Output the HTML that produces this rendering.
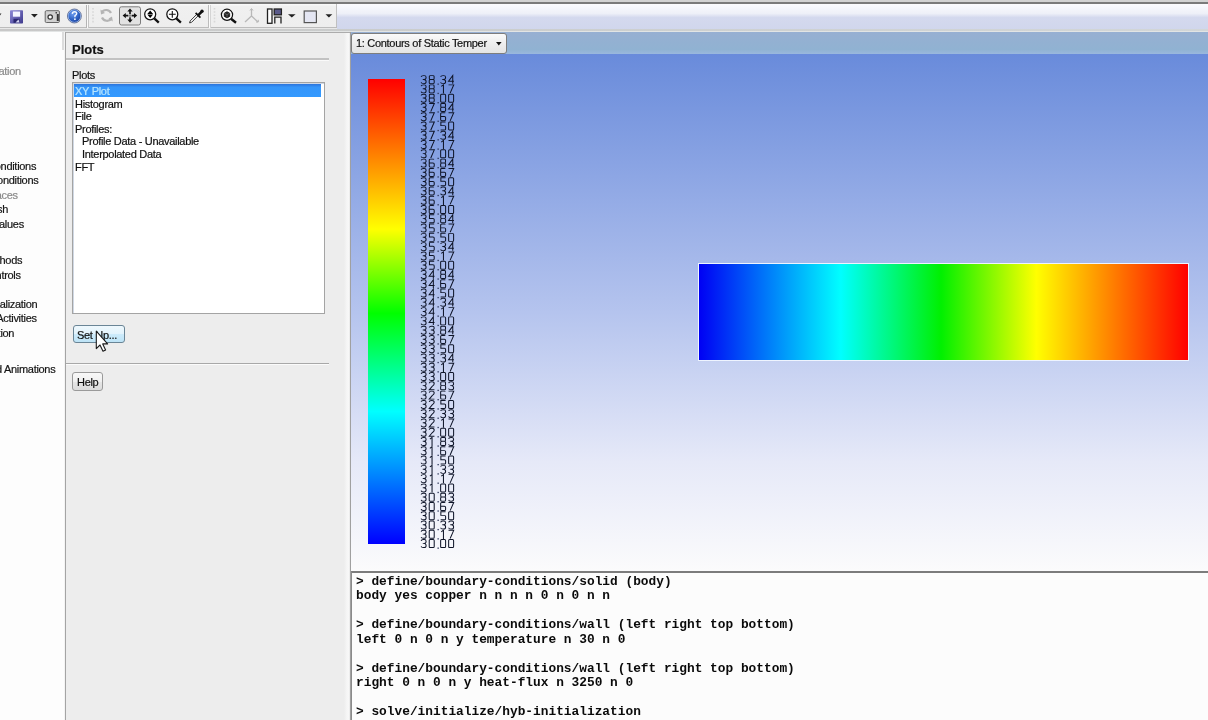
<!DOCTYPE html>
<html><head><meta charset="utf-8">
<style>
*{margin:0;padding:0;box-sizing:border-box}
html,body{width:1208px;height:720px;overflow:hidden;background:#f0f0f0;font-family:"Liberation Sans",sans-serif;position:relative}
.a{position:absolute}
.t{will-change:transform;-webkit-text-stroke:0.2px currentColor;position:absolute;white-space:pre;font-size:11px;letter-spacing:-0.3px;color:#000;line-height:12px}
.lab{position:absolute;left:420.6px;font-family:"Liberation Sans",sans-serif;font-size:12.0px;letter-spacing:1.4px;line-height:10px;color:#0c1430;white-space:pre}
.lab .dot{letter-spacing:0}
.con{will-change:transform;position:absolute;left:356.3px;font-family:"Liberation Mono",monospace;font-weight:bold;font-size:12.83px;line-height:14px;color:#0a0a0a;white-space:pre}
</style></head><body>
<!-- top strip -->
<div class="a" style="left:0;top:0;width:1208px;height:2px;background:#d2d2d2"></div>
<div class="a" style="left:0;top:2px;width:1208px;height:2px;background:#7a7a7a"></div>
<!-- toolbar -->
<div class="a" style="left:0;top:4px;width:337px;height:23px;background:linear-gradient(#fbfbfb,#f0f0f0 10%,#eeeeee)"></div>
<div class="a" style="left:336px;top:4px;width:1px;height:23px;background:#c0c0c0"></div>
<div class="a" style="left:337px;top:4px;width:871px;height:27px;background:linear-gradient(#fbfbfe,#eef0f8 35%,#d4d9ee 50%,#d0d6ec)"></div>
<div class="a" style="left:0;top:27px;width:337px;height:1px;background:#bcbcbc"></div>
<div class="a" style="left:0;top:28px;width:337px;height:1px;background:#e8e8e8"></div>
<div class="a" style="left:0;top:29px;width:1208px;height:2px;background:linear-gradient(90deg,#c8c8c8,#cacccc 30%,#d2d6d8)"></div>
<div class="a" style="left:0;top:31px;width:1208px;height:1px;background:#e2e4e4"></div>
<div class="a" style="left:0;top:32px;width:351px;height:1px;background:#acacac"></div>

<svg class="a" style="left:0;top:0" width="340" height="30" viewBox="0 0 340 30">
 <!-- cut dropdown arrow -->
 <path d="M-3 13.5 L1.5 13.5 L-0.8 16.5Z" fill="#333"/>
 <!-- save -->
 <defs>
  <linearGradient id="sv" x1="0" x2="1" y1="0" y2="1"><stop offset="0" stop-color="#8d88d8"/><stop offset="1" stop-color="#3e3a8c"/></linearGradient>
 </defs>
 <rect x="10" y="10.3" width="13" height="13.2" rx="0.8" fill="url(#sv)"/>
 <rect x="12.9" y="11.5" width="7.2" height="5.2" fill="#f4f4ff"/>
 <rect x="13.5" y="18.8" width="6" height="4" fill="#2a2670"/>
 <path d="M15.5 22.5 L18.5 19.5 L19.5 22.5Z" fill="#d8d8f4"/>
 <!-- dropdown -->
 <path d="M31 14 L37.8 14 L34.4 17.6Z" fill="#222"/>
 <!-- camera -->
 <rect x="45.2" y="10.7" width="14.2" height="11.8" rx="1.2" fill="#d0d0d0" stroke="#666" stroke-width="1"/>
 <circle cx="50.2" cy="17" r="2.2" fill="#fff" stroke="#333" stroke-width="1.2"/>
 <rect x="56.8" y="14" width="2" height="7" fill="#333"/>
 <rect x="55.5" y="12" width="1.5" height="1.5" fill="#444"/>
 <!-- help -->
 <defs><radialGradient id="hg" cx="0.38" cy="0.32" r="0.75"><stop offset="0" stop-color="#6f9ef0"/><stop offset="0.6" stop-color="#2f62c4"/><stop offset="1" stop-color="#1d3f9a"/></radialGradient></defs>
 <circle cx="74.4" cy="16" r="6.4" fill="url(#hg)" stroke="#9cc0f4" stroke-width="0.9"/>
 <circle cx="74.4" cy="16" r="7" fill="none" stroke="#44527e" stroke-width="0.7"/>
 <path d="M72.3 13.9 Q72.4 11.8 74.6 11.8 Q76.7 11.8 76.7 13.6 Q76.7 14.8 75 15.7 L74.9 17.2" fill="none" stroke="#f4f8ff" stroke-width="1.4"/>
 <rect x="74.1" y="18.4" width="1.6" height="1.6" fill="#f4f8ff"/>
 <!-- separator -->
 <rect x="86" y="5" width="1" height="23" fill="#b4b4b4"/>
 <rect x="87" y="5" width="1" height="23" fill="#fafafa"/>
 <rect x="88" y="5" width="1" height="23" fill="#c4c4c4"/>
 <path d="M93 8 V24" stroke="#d8d8d8" stroke-width="1.6" stroke-dasharray="1.6 1.6"/>
 <!-- rotate (gray) -->
 <path d="M111 13 A5.5 5.5 0 0 0 101.5 12.5" fill="none" stroke="#b4b4b4" stroke-width="2.2"/>
 <path d="M102 17.5 A5.5 5.5 0 0 0 111.5 18.5" fill="none" stroke="#b4b4b4" stroke-width="2.2"/>
 <path d="M100.5 9.5 L101 14.5 L105 13Z" fill="#b4b4b4"/>
 <path d="M112.8 21.5 L112 16.5 L108.5 18.5Z" fill="#b4b4b4"/>
 <!-- pan pressed -->
 <rect x="119.5" y="6.8" width="21" height="18.2" rx="2" fill="#e2e2e2" stroke="#7c7c7c" stroke-width="1"/>
 <path d="M130 11 V14 M130 17.2 V20.2 M125 15.6 H128.3 M131.7 15.6 H135" stroke="#111" stroke-width="1.6"/>
 <path d="M130 14 V17.2 M128.3 15.6 H131.7" stroke="#888" stroke-width="1.2"/>
 <path d="M130 8.4 L127.3 11.6 H132.7Z M130 22.8 L127.3 19.6 H132.7Z M122.6 15.6 L125.8 12.9 V18.3Z M137.2 15.6 L134 12.9 V18.3Z" fill="#111"/>
 <!-- zoom in/out -->
 <circle cx="150.2" cy="14.3" r="5.5" fill="#fff" stroke="#111" stroke-width="1.25"/>
 <path d="M154.2 18.3 L158.8 22.6" stroke="#111" stroke-width="2.3"/>
 <path d="M150.2 10.6 L147.3 14 H153.1Z M150.2 17.9 L147.3 14.6 H153.1Z" fill="#000"/>
 <!-- zoom plus -->
 <circle cx="172.3" cy="14.3" r="5.5" fill="#fff" stroke="#111" stroke-width="1.25"/>
 <path d="M176.3 18.3 L180.9 22.6" stroke="#111" stroke-width="2.3"/>
 <path d="M172.3 10.9 V17.7 M168.9 14.3 H175.7" stroke="#111" stroke-width="1.1"/>
 <!-- dropper -->
 <path d="M189.6 22.9 L190.2 20.9 L197.2 13.9 L198.6 15.3 L191.6 22.3Z" fill="#fbfbfb" stroke="#222" stroke-width="0.9" stroke-linejoin="round"/>
 <path d="M195.6 12.9 L200.4 17.7" stroke="#111" stroke-width="1.7"/>
 <path d="M198 15.4 L201.6 11.8" stroke="#111" stroke-width="2.6"/>
 <circle cx="202" cy="11.2" r="1.7" fill="#111"/>
 <!-- separator -->
 <rect x="208" y="5" width="1" height="23" fill="#bcbcbc"/>
 <rect x="209" y="5" width="1" height="23" fill="#fafafa"/>
 <rect x="210" y="5" width="1" height="23" fill="#d4d4d4"/>
 <path d="M214.5 8 V24" stroke="#d8d8d8" stroke-width="1.6" stroke-dasharray="1.6 1.6"/>
 <!-- zoom fit -->
 <circle cx="227" cy="14.8" r="5.6" fill="#fff" stroke="#111" stroke-width="1.25"/>
 <path d="M231 18.8 L236 22.8" stroke="#111" stroke-width="2.4"/>
 <path d="M224.3 13.2 L227 11.7 L229.7 13.2 V16.4 L227 17.9 L224.3 16.4Z" fill="#222" stroke="#111" stroke-width="0.8"/>
 <path d="M224.6 13.4 L227 14.6 L229.4 13.4 M227 14.6 V17.6" fill="none" stroke="#888" stroke-width="0.6"/>
 <!-- axes gray -->
 <path d="M251.5 9 V16 L245 22 M251.5 16 L258 22" fill="none" stroke="#b8b8b8" stroke-width="1.3"/>
 <path d="M250 10.5 L251.5 8.5 L253 10.5" fill="none" stroke="#b8b8b8" stroke-width="1"/>
 <path d="M256 22 H258.3 V19.8" fill="none" stroke="#b8b8b8" stroke-width="1"/>
 <!-- layout -->
 <rect x="267.5" y="9" width="4.5" height="14.3" fill="#fff" stroke="#222" stroke-width="1.3"/>
 <rect x="274.2" y="9" width="7.2" height="5.8" fill="#5a5a8a" stroke="#222" stroke-width="1.3"/>
 <path d="M274.8 23.4 V17.2 H281 V23.4" fill="none" stroke="#222" stroke-width="1.3"/>
 <path d="M288 14.3 L295.6 14.3 L291.8 17.6Z" fill="#222"/>
 <!-- square -->
 <rect x="304.2" y="11" width="12.2" height="11.6" fill="#e4e6f2" stroke="#555" stroke-width="1.2"/>
 <path d="M325.5 14.3 L332.3 14.3 L328.9 17.6Z" fill="#222"/>
</svg>

<!-- left nav panel -->
<div class="a" style="left:0;top:32px;width:65px;height:688px;background:#fdfdfd;overflow:hidden">
<div class="a" style="left:62px;top:0;width:2.6px;height:17.5px;background:#dcdcdc"></div>
</div>
<div class="a" style="left:0;top:0;width:65px;height:720px;overflow:hidden">
<div class="t" style="right:44.6px;top:65.0px;color:#8a8a8a">Mesh Generation</div>
<div class="t" style="right:28.9px;top:159.8px;color:#141414">Cell Zone Conditions</div>
<div class="t" style="right:26.7px;top:174.3px;color:#141414">Boundary Conditions</div>
<div class="t" style="right:47.2px;top:188.7px;color:#8a8a8a">Mesh Interfaces</div>
<div class="t" style="right:57.0px;top:203.0px;color:#141414">Dynamic Mesh</div>
<div class="t" style="right:41.1px;top:217.6px;color:#141414">Reference Values</div>
<div class="t" style="right:43.1px;top:254.2px;color:#141414">Solution Methods</div>
<div class="t" style="right:44.4px;top:268.5px;color:#141414">Solution Controls</div>
<div class="t" style="right:28.1px;top:297.9px;color:#141414">Solution Initialization</div>
<div class="t" style="right:28.1px;top:312.3px;color:#141414">Calculation Activities</div>
<div class="t" style="right:51.2px;top:326.6px;color:#141414">Run Calculation</div>
<div class="t" style="right:9.6px;top:363.3px;color:#141414">Graphics and Animations</div>
</div>
<div class="a" style="left:64px;top:32px;width:1px;height:688px;background:#f4f4f4"></div><div class="a" style="left:65px;top:32px;width:1px;height:688px;background:#a4a4a4"></div>

<!-- middle panel -->
<div class="a" style="left:66px;top:33px;width:284px;height:687px;background:#ededed"></div>
<div class="a" style="left:344px;top:33px;width:5px;height:687px;background:linear-gradient(90deg,#ededed,#f6f6f6 60%,#f8f8f8)"></div>
<div class="a" style="left:349.5px;top:32px;width:1.2px;height:688px;background:#a0a0a0"></div>
<div class="t" style="left:71.5px;top:42px;font-weight:bold;font-size:13px;letter-spacing:0;line-height:15px;color:#111">Plots</div>
<div class="a" style="left:66px;top:58.2px;width:263px;height:1.4px;background:#c2c2c2"></div>
<div class="a" style="left:66px;top:59.5px;width:263px;height:1px;background:#fafafa"></div>
<div class="t" style="left:71.7px;top:69.4px;color:#111">Plots</div>
<div class="a" style="left:72px;top:82px;width:253px;height:232px;background:#fff;border:1px solid #a4a4a4;box-shadow:inset 1px 1px 0 #d0d8e4"></div>
<div class="a" style="left:74.4px;top:84.3px;width:247px;height:12.7px;background:linear-gradient(#2c74dc,#3596fa 25%,#3399ff)"></div>
<div class="t" style="left:75px;top:85.2px;color:#b8e6ff">XY Plot</div>
<div class="t" style="left:75px;top:97.9px;color:#101010">Histogram</div>
<div class="t" style="left:75px;top:110.2px;color:#101010">File</div>
<div class="t" style="left:75px;top:122.7px;color:#101010">Profiles:</div>
<div class="t" style="left:82px;top:135.4px;color:#101010">Profile Data - Unavailable</div>
<div class="t" style="left:82px;top:147.8px;color:#101010">Interpolated Data</div>
<div class="t" style="left:75px;top:160.5px;color:#101010">FFT</div>
<!-- Set Up button -->
<div class="a" style="left:72.5px;top:324.8px;width:52.3px;height:18.5px;border:1px solid #6a8596;border-radius:3px;background:linear-gradient(#eef8fd,#e2f3fc 50%,#cdebfb 51%,#bde3f6)"></div>
<div class="t" style="left:76.5px;top:328.5px;color:#111">Set Up...</div>
<!-- cursor -->
<svg class="a" style="left:95px;top:330px" width="16" height="22" viewBox="0 0 16 22">
 <path d="M1.3 1.2 L1.3 18.6 L5 15 L8 21.2 L10.6 20 L7.7 13.9 L12.6 13.9Z" fill="#fff" stroke="#1a1a1a" stroke-width="1.1" stroke-linejoin="round"/>
</svg>
<div class="a" style="left:66px;top:363px;width:263px;height:1px;background:#a8a8a8"></div>
<div class="a" style="left:66px;top:364px;width:263px;height:1px;background:#fbfbfb"></div>
<!-- Help button -->
<div class="a" style="left:72.2px;top:372.2px;width:30.8px;height:18.4px;border:1px solid #9a9a9a;border-radius:3px;background:linear-gradient(#f8f8f8,#f0f0f0 50%,#e6e6e6 51%,#dcdcdc)"></div>
<div class="t" style="left:76.5px;top:376px;color:#111">Help</div>

<!-- tab strip -->
<div class="a" style="left:351px;top:32px;width:857px;height:22px;background:linear-gradient(#97afd2,#90b2d2 80%,#9ab8de)"></div>
<div class="a" style="left:351px;top:32.5px;width:156px;height:21px;border:1px solid #7d7d7d;border-radius:3px;background:linear-gradient(#fafafa,#eeeeee 50%,#e4e4e4)"></div>
<div class="t" style="left:355.6px;top:37.4px;color:#111">1: Contours of Static Temper</div>
<svg class="a" style="left:494px;top:41px" width="10" height="6"><path d="M2 1 H7.6 L4.8 4.6Z" fill="#111"/></svg>

<!-- graphics -->
<div class="a" style="left:351px;top:54px;width:857px;height:517px;background:linear-gradient(#698bdb,#b5c4ee 50%,#e6e9f8 79%,#fbfbfc)"></div>
<div class="a" style="left:368px;top:79px;width:36.5px;height:464.5px;background:linear-gradient(#ff0000 0%,#ffff00 32.3%,#00ff00 50.4%,#00ffff 71.5%,#0000ff 100%)"></div>
<div class="a" style="left:698px;top:262.5px;width:491px;height:98px;border:1px solid #eef4ff;background:linear-gradient(90deg,#0000f4 0%,#00ffff 29%,#00f000 49.5%,#ffff00 69%,#ff0000 100%)"></div>
<svg class="a" style="left:0;top:0" width="1208" height="600" viewBox="0 0 1208 600"><g fill="none" stroke="#0e1428" stroke-width="0.95">
<path transform="translate(420.60,75.10) scale(1.08,1)" d="M0.5 1.8 Q0.7 0.5 2.6 0.5 H3.4 Q5.1 0.5 5.1 2.3 Q5.1 4.3 3 4.3 H2 M3 4.3 Q5.1 4.3 5.1 6.4 Q5.1 8.5 3.3 8.5 H2.6 Q0.7 8.5 0.5 7.2"/>
<path transform="translate(428.70,75.10) scale(1.08,1)" d="M1.6 0.5 H4 Q5 0.5 5 1.5 V3.3 Q5 4.3 4 4.3 H1.6 Q0.6 4.3 0.6 3.3 V1.5 Q0.6 0.5 1.6 0.5Z M1.6 4.3 H4 Q5.1 4.3 5.1 5.4 V7.4 Q5.1 8.5 4 8.5 H1.6 Q0.5 8.5 0.5 7.4 V5.4 Q0.5 4.3 1.6 4.3"/>
<path transform="translate(440.10,75.10) scale(1.08,1)" d="M0.5 1.8 Q0.7 0.5 2.6 0.5 H3.4 Q5.1 0.5 5.1 2.3 Q5.1 4.3 3 4.3 H2 M3 4.3 Q5.1 4.3 5.1 6.4 Q5.1 8.5 3.3 8.5 H2.6 Q0.7 8.5 0.5 7.2"/>
<path transform="translate(448.10,75.10) scale(1.08,1)" d="M4.3 8.7 V0.5 L0.4 6.2 H5.4"/>
<rect x="437.50" y="83.50" width="1.3" height="1.3" fill="#2a3458" stroke="none"/>
<path transform="translate(420.60,84.38) scale(1.08,1)" d="M0.5 1.8 Q0.7 0.5 2.6 0.5 H3.4 Q5.1 0.5 5.1 2.3 Q5.1 4.3 3 4.3 H2 M3 4.3 Q5.1 4.3 5.1 6.4 Q5.1 8.5 3.3 8.5 H2.6 Q0.7 8.5 0.5 7.2"/>
<path transform="translate(428.70,84.38) scale(1.08,1)" d="M1.6 0.5 H4 Q5 0.5 5 1.5 V3.3 Q5 4.3 4 4.3 H1.6 Q0.6 4.3 0.6 3.3 V1.5 Q0.6 0.5 1.6 0.5Z M1.6 4.3 H4 Q5.1 4.3 5.1 5.4 V7.4 Q5.1 8.5 4 8.5 H1.6 Q0.5 8.5 0.5 7.4 V5.4 Q0.5 4.3 1.6 4.3"/>
<path transform="translate(440.10,84.38) scale(1.08,1)" d="M3.1 -0.1 V9.2 M1.1 2 L3.1 0.4"/>
<path transform="translate(448.10,84.38) scale(1.08,1)" d="M0.4 0.5 H5.2 L1.9 8.7"/>
<rect x="437.50" y="92.78" width="1.3" height="1.3" fill="#2a3458" stroke="none"/>
<path transform="translate(420.60,93.66) scale(1.08,1)" d="M0.5 1.8 Q0.7 0.5 2.6 0.5 H3.4 Q5.1 0.5 5.1 2.3 Q5.1 4.3 3 4.3 H2 M3 4.3 Q5.1 4.3 5.1 6.4 Q5.1 8.5 3.3 8.5 H2.6 Q0.7 8.5 0.5 7.2"/>
<path transform="translate(428.70,93.66) scale(1.08,1)" d="M1.6 0.5 H4 Q5 0.5 5 1.5 V3.3 Q5 4.3 4 4.3 H1.6 Q0.6 4.3 0.6 3.3 V1.5 Q0.6 0.5 1.6 0.5Z M1.6 4.3 H4 Q5.1 4.3 5.1 5.4 V7.4 Q5.1 8.5 4 8.5 H1.6 Q0.5 8.5 0.5 7.4 V5.4 Q0.5 4.3 1.6 4.3"/>
<path transform="translate(440.10,93.66) scale(1.08,1)" d="M1.4 0.5 H4.2 Q5.1 0.5 5.1 1.6 V7.4 Q5.1 8.5 4.2 8.5 H1.4 Q0.5 8.5 0.5 7.4 V1.6 Q0.5 0.5 1.4 0.5Z"/>
<path transform="translate(448.10,93.66) scale(1.08,1)" d="M1.4 0.5 H4.2 Q5.1 0.5 5.1 1.6 V7.4 Q5.1 8.5 4.2 8.5 H1.4 Q0.5 8.5 0.5 7.4 V1.6 Q0.5 0.5 1.4 0.5Z"/>
<rect x="437.50" y="102.06" width="1.3" height="1.3" fill="#2a3458" stroke="none"/>
<path transform="translate(420.60,102.94) scale(1.08,1)" d="M0.5 1.8 Q0.7 0.5 2.6 0.5 H3.4 Q5.1 0.5 5.1 2.3 Q5.1 4.3 3 4.3 H2 M3 4.3 Q5.1 4.3 5.1 6.4 Q5.1 8.5 3.3 8.5 H2.6 Q0.7 8.5 0.5 7.2"/>
<path transform="translate(428.70,102.94) scale(1.08,1)" d="M0.4 0.5 H5.2 L1.9 8.7"/>
<path transform="translate(440.10,102.94) scale(1.08,1)" d="M1.6 0.5 H4 Q5 0.5 5 1.5 V3.3 Q5 4.3 4 4.3 H1.6 Q0.6 4.3 0.6 3.3 V1.5 Q0.6 0.5 1.6 0.5Z M1.6 4.3 H4 Q5.1 4.3 5.1 5.4 V7.4 Q5.1 8.5 4 8.5 H1.6 Q0.5 8.5 0.5 7.4 V5.4 Q0.5 4.3 1.6 4.3"/>
<path transform="translate(448.10,102.94) scale(1.08,1)" d="M4.3 8.7 V0.5 L0.4 6.2 H5.4"/>
<rect x="437.50" y="111.34" width="1.3" height="1.3" fill="#2a3458" stroke="none"/>
<path transform="translate(420.60,112.22) scale(1.08,1)" d="M0.5 1.8 Q0.7 0.5 2.6 0.5 H3.4 Q5.1 0.5 5.1 2.3 Q5.1 4.3 3 4.3 H2 M3 4.3 Q5.1 4.3 5.1 6.4 Q5.1 8.5 3.3 8.5 H2.6 Q0.7 8.5 0.5 7.2"/>
<path transform="translate(428.70,112.22) scale(1.08,1)" d="M0.4 0.5 H5.2 L1.9 8.7"/>
<path transform="translate(440.10,112.22) scale(1.08,1)" d="M4.9 0.8 Q4.6 0.5 4 0.5 H1.6 Q0.5 0.5 0.5 1.6 V7.4 Q0.5 8.5 1.6 8.5 H4 Q5.1 8.5 5.1 7.4 V5.4 Q5.1 4.3 4 4.3 H0.5"/>
<path transform="translate(448.10,112.22) scale(1.08,1)" d="M0.4 0.5 H5.2 L1.9 8.7"/>
<rect x="437.50" y="120.62" width="1.3" height="1.3" fill="#2a3458" stroke="none"/>
<path transform="translate(420.60,121.50) scale(1.08,1)" d="M0.5 1.8 Q0.7 0.5 2.6 0.5 H3.4 Q5.1 0.5 5.1 2.3 Q5.1 4.3 3 4.3 H2 M3 4.3 Q5.1 4.3 5.1 6.4 Q5.1 8.5 3.3 8.5 H2.6 Q0.7 8.5 0.5 7.2"/>
<path transform="translate(428.70,121.50) scale(1.08,1)" d="M0.4 0.5 H5.2 L1.9 8.7"/>
<path transform="translate(440.10,121.50) scale(1.08,1)" d="M5.1 0.5 H0.7 V4.1 H4 Q5.1 4.1 5.1 5.2 V7.4 Q5.1 8.5 4 8.5 H0.5"/>
<path transform="translate(448.10,121.50) scale(1.08,1)" d="M1.4 0.5 H4.2 Q5.1 0.5 5.1 1.6 V7.4 Q5.1 8.5 4.2 8.5 H1.4 Q0.5 8.5 0.5 7.4 V1.6 Q0.5 0.5 1.4 0.5Z"/>
<rect x="437.50" y="129.90" width="1.3" height="1.3" fill="#2a3458" stroke="none"/>
<path transform="translate(420.60,130.78) scale(1.08,1)" d="M0.5 1.8 Q0.7 0.5 2.6 0.5 H3.4 Q5.1 0.5 5.1 2.3 Q5.1 4.3 3 4.3 H2 M3 4.3 Q5.1 4.3 5.1 6.4 Q5.1 8.5 3.3 8.5 H2.6 Q0.7 8.5 0.5 7.2"/>
<path transform="translate(428.70,130.78) scale(1.08,1)" d="M0.4 0.5 H5.2 L1.9 8.7"/>
<path transform="translate(440.10,130.78) scale(1.08,1)" d="M0.5 1.8 Q0.7 0.5 2.6 0.5 H3.4 Q5.1 0.5 5.1 2.3 Q5.1 4.3 3 4.3 H2 M3 4.3 Q5.1 4.3 5.1 6.4 Q5.1 8.5 3.3 8.5 H2.6 Q0.7 8.5 0.5 7.2"/>
<path transform="translate(448.10,130.78) scale(1.08,1)" d="M4.3 8.7 V0.5 L0.4 6.2 H5.4"/>
<rect x="437.50" y="139.18" width="1.3" height="1.3" fill="#2a3458" stroke="none"/>
<path transform="translate(420.60,140.06) scale(1.08,1)" d="M0.5 1.8 Q0.7 0.5 2.6 0.5 H3.4 Q5.1 0.5 5.1 2.3 Q5.1 4.3 3 4.3 H2 M3 4.3 Q5.1 4.3 5.1 6.4 Q5.1 8.5 3.3 8.5 H2.6 Q0.7 8.5 0.5 7.2"/>
<path transform="translate(428.70,140.06) scale(1.08,1)" d="M0.4 0.5 H5.2 L1.9 8.7"/>
<path transform="translate(440.10,140.06) scale(1.08,1)" d="M3.1 -0.1 V9.2 M1.1 2 L3.1 0.4"/>
<path transform="translate(448.10,140.06) scale(1.08,1)" d="M0.4 0.5 H5.2 L1.9 8.7"/>
<rect x="437.50" y="148.46" width="1.3" height="1.3" fill="#2a3458" stroke="none"/>
<path transform="translate(420.60,149.34) scale(1.08,1)" d="M0.5 1.8 Q0.7 0.5 2.6 0.5 H3.4 Q5.1 0.5 5.1 2.3 Q5.1 4.3 3 4.3 H2 M3 4.3 Q5.1 4.3 5.1 6.4 Q5.1 8.5 3.3 8.5 H2.6 Q0.7 8.5 0.5 7.2"/>
<path transform="translate(428.70,149.34) scale(1.08,1)" d="M0.4 0.5 H5.2 L1.9 8.7"/>
<path transform="translate(440.10,149.34) scale(1.08,1)" d="M1.4 0.5 H4.2 Q5.1 0.5 5.1 1.6 V7.4 Q5.1 8.5 4.2 8.5 H1.4 Q0.5 8.5 0.5 7.4 V1.6 Q0.5 0.5 1.4 0.5Z"/>
<path transform="translate(448.10,149.34) scale(1.08,1)" d="M1.4 0.5 H4.2 Q5.1 0.5 5.1 1.6 V7.4 Q5.1 8.5 4.2 8.5 H1.4 Q0.5 8.5 0.5 7.4 V1.6 Q0.5 0.5 1.4 0.5Z"/>
<rect x="437.50" y="157.74" width="1.3" height="1.3" fill="#2a3458" stroke="none"/>
<path transform="translate(420.60,158.62) scale(1.08,1)" d="M0.5 1.8 Q0.7 0.5 2.6 0.5 H3.4 Q5.1 0.5 5.1 2.3 Q5.1 4.3 3 4.3 H2 M3 4.3 Q5.1 4.3 5.1 6.4 Q5.1 8.5 3.3 8.5 H2.6 Q0.7 8.5 0.5 7.2"/>
<path transform="translate(428.70,158.62) scale(1.08,1)" d="M4.9 0.8 Q4.6 0.5 4 0.5 H1.6 Q0.5 0.5 0.5 1.6 V7.4 Q0.5 8.5 1.6 8.5 H4 Q5.1 8.5 5.1 7.4 V5.4 Q5.1 4.3 4 4.3 H0.5"/>
<path transform="translate(440.10,158.62) scale(1.08,1)" d="M1.6 0.5 H4 Q5 0.5 5 1.5 V3.3 Q5 4.3 4 4.3 H1.6 Q0.6 4.3 0.6 3.3 V1.5 Q0.6 0.5 1.6 0.5Z M1.6 4.3 H4 Q5.1 4.3 5.1 5.4 V7.4 Q5.1 8.5 4 8.5 H1.6 Q0.5 8.5 0.5 7.4 V5.4 Q0.5 4.3 1.6 4.3"/>
<path transform="translate(448.10,158.62) scale(1.08,1)" d="M4.3 8.7 V0.5 L0.4 6.2 H5.4"/>
<rect x="437.50" y="167.02" width="1.3" height="1.3" fill="#2a3458" stroke="none"/>
<path transform="translate(420.60,167.90) scale(1.08,1)" d="M0.5 1.8 Q0.7 0.5 2.6 0.5 H3.4 Q5.1 0.5 5.1 2.3 Q5.1 4.3 3 4.3 H2 M3 4.3 Q5.1 4.3 5.1 6.4 Q5.1 8.5 3.3 8.5 H2.6 Q0.7 8.5 0.5 7.2"/>
<path transform="translate(428.70,167.90) scale(1.08,1)" d="M4.9 0.8 Q4.6 0.5 4 0.5 H1.6 Q0.5 0.5 0.5 1.6 V7.4 Q0.5 8.5 1.6 8.5 H4 Q5.1 8.5 5.1 7.4 V5.4 Q5.1 4.3 4 4.3 H0.5"/>
<path transform="translate(440.10,167.90) scale(1.08,1)" d="M4.9 0.8 Q4.6 0.5 4 0.5 H1.6 Q0.5 0.5 0.5 1.6 V7.4 Q0.5 8.5 1.6 8.5 H4 Q5.1 8.5 5.1 7.4 V5.4 Q5.1 4.3 4 4.3 H0.5"/>
<path transform="translate(448.10,167.90) scale(1.08,1)" d="M0.4 0.5 H5.2 L1.9 8.7"/>
<rect x="437.50" y="176.30" width="1.3" height="1.3" fill="#2a3458" stroke="none"/>
<path transform="translate(420.60,177.18) scale(1.08,1)" d="M0.5 1.8 Q0.7 0.5 2.6 0.5 H3.4 Q5.1 0.5 5.1 2.3 Q5.1 4.3 3 4.3 H2 M3 4.3 Q5.1 4.3 5.1 6.4 Q5.1 8.5 3.3 8.5 H2.6 Q0.7 8.5 0.5 7.2"/>
<path transform="translate(428.70,177.18) scale(1.08,1)" d="M4.9 0.8 Q4.6 0.5 4 0.5 H1.6 Q0.5 0.5 0.5 1.6 V7.4 Q0.5 8.5 1.6 8.5 H4 Q5.1 8.5 5.1 7.4 V5.4 Q5.1 4.3 4 4.3 H0.5"/>
<path transform="translate(440.10,177.18) scale(1.08,1)" d="M5.1 0.5 H0.7 V4.1 H4 Q5.1 4.1 5.1 5.2 V7.4 Q5.1 8.5 4 8.5 H0.5"/>
<path transform="translate(448.10,177.18) scale(1.08,1)" d="M1.4 0.5 H4.2 Q5.1 0.5 5.1 1.6 V7.4 Q5.1 8.5 4.2 8.5 H1.4 Q0.5 8.5 0.5 7.4 V1.6 Q0.5 0.5 1.4 0.5Z"/>
<rect x="437.50" y="185.58" width="1.3" height="1.3" fill="#2a3458" stroke="none"/>
<path transform="translate(420.60,186.46) scale(1.08,1)" d="M0.5 1.8 Q0.7 0.5 2.6 0.5 H3.4 Q5.1 0.5 5.1 2.3 Q5.1 4.3 3 4.3 H2 M3 4.3 Q5.1 4.3 5.1 6.4 Q5.1 8.5 3.3 8.5 H2.6 Q0.7 8.5 0.5 7.2"/>
<path transform="translate(428.70,186.46) scale(1.08,1)" d="M4.9 0.8 Q4.6 0.5 4 0.5 H1.6 Q0.5 0.5 0.5 1.6 V7.4 Q0.5 8.5 1.6 8.5 H4 Q5.1 8.5 5.1 7.4 V5.4 Q5.1 4.3 4 4.3 H0.5"/>
<path transform="translate(440.10,186.46) scale(1.08,1)" d="M0.5 1.8 Q0.7 0.5 2.6 0.5 H3.4 Q5.1 0.5 5.1 2.3 Q5.1 4.3 3 4.3 H2 M3 4.3 Q5.1 4.3 5.1 6.4 Q5.1 8.5 3.3 8.5 H2.6 Q0.7 8.5 0.5 7.2"/>
<path transform="translate(448.10,186.46) scale(1.08,1)" d="M4.3 8.7 V0.5 L0.4 6.2 H5.4"/>
<rect x="437.50" y="194.86" width="1.3" height="1.3" fill="#2a3458" stroke="none"/>
<path transform="translate(420.60,195.74) scale(1.08,1)" d="M0.5 1.8 Q0.7 0.5 2.6 0.5 H3.4 Q5.1 0.5 5.1 2.3 Q5.1 4.3 3 4.3 H2 M3 4.3 Q5.1 4.3 5.1 6.4 Q5.1 8.5 3.3 8.5 H2.6 Q0.7 8.5 0.5 7.2"/>
<path transform="translate(428.70,195.74) scale(1.08,1)" d="M4.9 0.8 Q4.6 0.5 4 0.5 H1.6 Q0.5 0.5 0.5 1.6 V7.4 Q0.5 8.5 1.6 8.5 H4 Q5.1 8.5 5.1 7.4 V5.4 Q5.1 4.3 4 4.3 H0.5"/>
<path transform="translate(440.10,195.74) scale(1.08,1)" d="M3.1 -0.1 V9.2 M1.1 2 L3.1 0.4"/>
<path transform="translate(448.10,195.74) scale(1.08,1)" d="M0.4 0.5 H5.2 L1.9 8.7"/>
<rect x="437.50" y="204.14" width="1.3" height="1.3" fill="#2a3458" stroke="none"/>
<path transform="translate(420.60,205.02) scale(1.08,1)" d="M0.5 1.8 Q0.7 0.5 2.6 0.5 H3.4 Q5.1 0.5 5.1 2.3 Q5.1 4.3 3 4.3 H2 M3 4.3 Q5.1 4.3 5.1 6.4 Q5.1 8.5 3.3 8.5 H2.6 Q0.7 8.5 0.5 7.2"/>
<path transform="translate(428.70,205.02) scale(1.08,1)" d="M4.9 0.8 Q4.6 0.5 4 0.5 H1.6 Q0.5 0.5 0.5 1.6 V7.4 Q0.5 8.5 1.6 8.5 H4 Q5.1 8.5 5.1 7.4 V5.4 Q5.1 4.3 4 4.3 H0.5"/>
<path transform="translate(440.10,205.02) scale(1.08,1)" d="M1.4 0.5 H4.2 Q5.1 0.5 5.1 1.6 V7.4 Q5.1 8.5 4.2 8.5 H1.4 Q0.5 8.5 0.5 7.4 V1.6 Q0.5 0.5 1.4 0.5Z"/>
<path transform="translate(448.10,205.02) scale(1.08,1)" d="M1.4 0.5 H4.2 Q5.1 0.5 5.1 1.6 V7.4 Q5.1 8.5 4.2 8.5 H1.4 Q0.5 8.5 0.5 7.4 V1.6 Q0.5 0.5 1.4 0.5Z"/>
<rect x="437.50" y="213.42" width="1.3" height="1.3" fill="#2a3458" stroke="none"/>
<path transform="translate(420.60,214.30) scale(1.08,1)" d="M0.5 1.8 Q0.7 0.5 2.6 0.5 H3.4 Q5.1 0.5 5.1 2.3 Q5.1 4.3 3 4.3 H2 M3 4.3 Q5.1 4.3 5.1 6.4 Q5.1 8.5 3.3 8.5 H2.6 Q0.7 8.5 0.5 7.2"/>
<path transform="translate(428.70,214.30) scale(1.08,1)" d="M5.1 0.5 H0.7 V4.1 H4 Q5.1 4.1 5.1 5.2 V7.4 Q5.1 8.5 4 8.5 H0.5"/>
<path transform="translate(440.10,214.30) scale(1.08,1)" d="M1.6 0.5 H4 Q5 0.5 5 1.5 V3.3 Q5 4.3 4 4.3 H1.6 Q0.6 4.3 0.6 3.3 V1.5 Q0.6 0.5 1.6 0.5Z M1.6 4.3 H4 Q5.1 4.3 5.1 5.4 V7.4 Q5.1 8.5 4 8.5 H1.6 Q0.5 8.5 0.5 7.4 V5.4 Q0.5 4.3 1.6 4.3"/>
<path transform="translate(448.10,214.30) scale(1.08,1)" d="M4.3 8.7 V0.5 L0.4 6.2 H5.4"/>
<rect x="437.50" y="222.70" width="1.3" height="1.3" fill="#2a3458" stroke="none"/>
<path transform="translate(420.60,223.58) scale(1.08,1)" d="M0.5 1.8 Q0.7 0.5 2.6 0.5 H3.4 Q5.1 0.5 5.1 2.3 Q5.1 4.3 3 4.3 H2 M3 4.3 Q5.1 4.3 5.1 6.4 Q5.1 8.5 3.3 8.5 H2.6 Q0.7 8.5 0.5 7.2"/>
<path transform="translate(428.70,223.58) scale(1.08,1)" d="M5.1 0.5 H0.7 V4.1 H4 Q5.1 4.1 5.1 5.2 V7.4 Q5.1 8.5 4 8.5 H0.5"/>
<path transform="translate(440.10,223.58) scale(1.08,1)" d="M4.9 0.8 Q4.6 0.5 4 0.5 H1.6 Q0.5 0.5 0.5 1.6 V7.4 Q0.5 8.5 1.6 8.5 H4 Q5.1 8.5 5.1 7.4 V5.4 Q5.1 4.3 4 4.3 H0.5"/>
<path transform="translate(448.10,223.58) scale(1.08,1)" d="M0.4 0.5 H5.2 L1.9 8.7"/>
<rect x="437.50" y="231.98" width="1.3" height="1.3" fill="#2a3458" stroke="none"/>
<path transform="translate(420.60,232.86) scale(1.08,1)" d="M0.5 1.8 Q0.7 0.5 2.6 0.5 H3.4 Q5.1 0.5 5.1 2.3 Q5.1 4.3 3 4.3 H2 M3 4.3 Q5.1 4.3 5.1 6.4 Q5.1 8.5 3.3 8.5 H2.6 Q0.7 8.5 0.5 7.2"/>
<path transform="translate(428.70,232.86) scale(1.08,1)" d="M5.1 0.5 H0.7 V4.1 H4 Q5.1 4.1 5.1 5.2 V7.4 Q5.1 8.5 4 8.5 H0.5"/>
<path transform="translate(440.10,232.86) scale(1.08,1)" d="M5.1 0.5 H0.7 V4.1 H4 Q5.1 4.1 5.1 5.2 V7.4 Q5.1 8.5 4 8.5 H0.5"/>
<path transform="translate(448.10,232.86) scale(1.08,1)" d="M1.4 0.5 H4.2 Q5.1 0.5 5.1 1.6 V7.4 Q5.1 8.5 4.2 8.5 H1.4 Q0.5 8.5 0.5 7.4 V1.6 Q0.5 0.5 1.4 0.5Z"/>
<rect x="437.50" y="241.26" width="1.3" height="1.3" fill="#2a3458" stroke="none"/>
<path transform="translate(420.60,242.14) scale(1.08,1)" d="M0.5 1.8 Q0.7 0.5 2.6 0.5 H3.4 Q5.1 0.5 5.1 2.3 Q5.1 4.3 3 4.3 H2 M3 4.3 Q5.1 4.3 5.1 6.4 Q5.1 8.5 3.3 8.5 H2.6 Q0.7 8.5 0.5 7.2"/>
<path transform="translate(428.70,242.14) scale(1.08,1)" d="M5.1 0.5 H0.7 V4.1 H4 Q5.1 4.1 5.1 5.2 V7.4 Q5.1 8.5 4 8.5 H0.5"/>
<path transform="translate(440.10,242.14) scale(1.08,1)" d="M0.5 1.8 Q0.7 0.5 2.6 0.5 H3.4 Q5.1 0.5 5.1 2.3 Q5.1 4.3 3 4.3 H2 M3 4.3 Q5.1 4.3 5.1 6.4 Q5.1 8.5 3.3 8.5 H2.6 Q0.7 8.5 0.5 7.2"/>
<path transform="translate(448.10,242.14) scale(1.08,1)" d="M4.3 8.7 V0.5 L0.4 6.2 H5.4"/>
<rect x="437.50" y="250.54" width="1.3" height="1.3" fill="#2a3458" stroke="none"/>
<path transform="translate(420.60,251.42) scale(1.08,1)" d="M0.5 1.8 Q0.7 0.5 2.6 0.5 H3.4 Q5.1 0.5 5.1 2.3 Q5.1 4.3 3 4.3 H2 M3 4.3 Q5.1 4.3 5.1 6.4 Q5.1 8.5 3.3 8.5 H2.6 Q0.7 8.5 0.5 7.2"/>
<path transform="translate(428.70,251.42) scale(1.08,1)" d="M5.1 0.5 H0.7 V4.1 H4 Q5.1 4.1 5.1 5.2 V7.4 Q5.1 8.5 4 8.5 H0.5"/>
<path transform="translate(440.10,251.42) scale(1.08,1)" d="M3.1 -0.1 V9.2 M1.1 2 L3.1 0.4"/>
<path transform="translate(448.10,251.42) scale(1.08,1)" d="M0.4 0.5 H5.2 L1.9 8.7"/>
<rect x="437.50" y="259.82" width="1.3" height="1.3" fill="#2a3458" stroke="none"/>
<path transform="translate(420.60,260.70) scale(1.08,1)" d="M0.5 1.8 Q0.7 0.5 2.6 0.5 H3.4 Q5.1 0.5 5.1 2.3 Q5.1 4.3 3 4.3 H2 M3 4.3 Q5.1 4.3 5.1 6.4 Q5.1 8.5 3.3 8.5 H2.6 Q0.7 8.5 0.5 7.2"/>
<path transform="translate(428.70,260.70) scale(1.08,1)" d="M5.1 0.5 H0.7 V4.1 H4 Q5.1 4.1 5.1 5.2 V7.4 Q5.1 8.5 4 8.5 H0.5"/>
<path transform="translate(440.10,260.70) scale(1.08,1)" d="M1.4 0.5 H4.2 Q5.1 0.5 5.1 1.6 V7.4 Q5.1 8.5 4.2 8.5 H1.4 Q0.5 8.5 0.5 7.4 V1.6 Q0.5 0.5 1.4 0.5Z"/>
<path transform="translate(448.10,260.70) scale(1.08,1)" d="M1.4 0.5 H4.2 Q5.1 0.5 5.1 1.6 V7.4 Q5.1 8.5 4.2 8.5 H1.4 Q0.5 8.5 0.5 7.4 V1.6 Q0.5 0.5 1.4 0.5Z"/>
<rect x="437.50" y="269.10" width="1.3" height="1.3" fill="#2a3458" stroke="none"/>
<path transform="translate(420.60,269.98) scale(1.08,1)" d="M0.5 1.8 Q0.7 0.5 2.6 0.5 H3.4 Q5.1 0.5 5.1 2.3 Q5.1 4.3 3 4.3 H2 M3 4.3 Q5.1 4.3 5.1 6.4 Q5.1 8.5 3.3 8.5 H2.6 Q0.7 8.5 0.5 7.2"/>
<path transform="translate(428.70,269.98) scale(1.08,1)" d="M4.3 8.7 V0.5 L0.4 6.2 H5.4"/>
<path transform="translate(440.10,269.98) scale(1.08,1)" d="M1.6 0.5 H4 Q5 0.5 5 1.5 V3.3 Q5 4.3 4 4.3 H1.6 Q0.6 4.3 0.6 3.3 V1.5 Q0.6 0.5 1.6 0.5Z M1.6 4.3 H4 Q5.1 4.3 5.1 5.4 V7.4 Q5.1 8.5 4 8.5 H1.6 Q0.5 8.5 0.5 7.4 V5.4 Q0.5 4.3 1.6 4.3"/>
<path transform="translate(448.10,269.98) scale(1.08,1)" d="M4.3 8.7 V0.5 L0.4 6.2 H5.4"/>
<rect x="437.50" y="278.38" width="1.3" height="1.3" fill="#2a3458" stroke="none"/>
<path transform="translate(420.60,279.26) scale(1.08,1)" d="M0.5 1.8 Q0.7 0.5 2.6 0.5 H3.4 Q5.1 0.5 5.1 2.3 Q5.1 4.3 3 4.3 H2 M3 4.3 Q5.1 4.3 5.1 6.4 Q5.1 8.5 3.3 8.5 H2.6 Q0.7 8.5 0.5 7.2"/>
<path transform="translate(428.70,279.26) scale(1.08,1)" d="M4.3 8.7 V0.5 L0.4 6.2 H5.4"/>
<path transform="translate(440.10,279.26) scale(1.08,1)" d="M4.9 0.8 Q4.6 0.5 4 0.5 H1.6 Q0.5 0.5 0.5 1.6 V7.4 Q0.5 8.5 1.6 8.5 H4 Q5.1 8.5 5.1 7.4 V5.4 Q5.1 4.3 4 4.3 H0.5"/>
<path transform="translate(448.10,279.26) scale(1.08,1)" d="M0.4 0.5 H5.2 L1.9 8.7"/>
<rect x="437.50" y="287.66" width="1.3" height="1.3" fill="#2a3458" stroke="none"/>
<path transform="translate(420.60,288.54) scale(1.08,1)" d="M0.5 1.8 Q0.7 0.5 2.6 0.5 H3.4 Q5.1 0.5 5.1 2.3 Q5.1 4.3 3 4.3 H2 M3 4.3 Q5.1 4.3 5.1 6.4 Q5.1 8.5 3.3 8.5 H2.6 Q0.7 8.5 0.5 7.2"/>
<path transform="translate(428.70,288.54) scale(1.08,1)" d="M4.3 8.7 V0.5 L0.4 6.2 H5.4"/>
<path transform="translate(440.10,288.54) scale(1.08,1)" d="M5.1 0.5 H0.7 V4.1 H4 Q5.1 4.1 5.1 5.2 V7.4 Q5.1 8.5 4 8.5 H0.5"/>
<path transform="translate(448.10,288.54) scale(1.08,1)" d="M1.4 0.5 H4.2 Q5.1 0.5 5.1 1.6 V7.4 Q5.1 8.5 4.2 8.5 H1.4 Q0.5 8.5 0.5 7.4 V1.6 Q0.5 0.5 1.4 0.5Z"/>
<rect x="437.50" y="296.94" width="1.3" height="1.3" fill="#2a3458" stroke="none"/>
<path transform="translate(420.60,297.82) scale(1.08,1)" d="M0.5 1.8 Q0.7 0.5 2.6 0.5 H3.4 Q5.1 0.5 5.1 2.3 Q5.1 4.3 3 4.3 H2 M3 4.3 Q5.1 4.3 5.1 6.4 Q5.1 8.5 3.3 8.5 H2.6 Q0.7 8.5 0.5 7.2"/>
<path transform="translate(428.70,297.82) scale(1.08,1)" d="M4.3 8.7 V0.5 L0.4 6.2 H5.4"/>
<path transform="translate(440.10,297.82) scale(1.08,1)" d="M0.5 1.8 Q0.7 0.5 2.6 0.5 H3.4 Q5.1 0.5 5.1 2.3 Q5.1 4.3 3 4.3 H2 M3 4.3 Q5.1 4.3 5.1 6.4 Q5.1 8.5 3.3 8.5 H2.6 Q0.7 8.5 0.5 7.2"/>
<path transform="translate(448.10,297.82) scale(1.08,1)" d="M4.3 8.7 V0.5 L0.4 6.2 H5.4"/>
<rect x="437.50" y="306.22" width="1.3" height="1.3" fill="#2a3458" stroke="none"/>
<path transform="translate(420.60,307.10) scale(1.08,1)" d="M0.5 1.8 Q0.7 0.5 2.6 0.5 H3.4 Q5.1 0.5 5.1 2.3 Q5.1 4.3 3 4.3 H2 M3 4.3 Q5.1 4.3 5.1 6.4 Q5.1 8.5 3.3 8.5 H2.6 Q0.7 8.5 0.5 7.2"/>
<path transform="translate(428.70,307.10) scale(1.08,1)" d="M4.3 8.7 V0.5 L0.4 6.2 H5.4"/>
<path transform="translate(440.10,307.10) scale(1.08,1)" d="M3.1 -0.1 V9.2 M1.1 2 L3.1 0.4"/>
<path transform="translate(448.10,307.10) scale(1.08,1)" d="M0.4 0.5 H5.2 L1.9 8.7"/>
<rect x="437.50" y="315.50" width="1.3" height="1.3" fill="#2a3458" stroke="none"/>
<path transform="translate(420.60,316.38) scale(1.08,1)" d="M0.5 1.8 Q0.7 0.5 2.6 0.5 H3.4 Q5.1 0.5 5.1 2.3 Q5.1 4.3 3 4.3 H2 M3 4.3 Q5.1 4.3 5.1 6.4 Q5.1 8.5 3.3 8.5 H2.6 Q0.7 8.5 0.5 7.2"/>
<path transform="translate(428.70,316.38) scale(1.08,1)" d="M4.3 8.7 V0.5 L0.4 6.2 H5.4"/>
<path transform="translate(440.10,316.38) scale(1.08,1)" d="M1.4 0.5 H4.2 Q5.1 0.5 5.1 1.6 V7.4 Q5.1 8.5 4.2 8.5 H1.4 Q0.5 8.5 0.5 7.4 V1.6 Q0.5 0.5 1.4 0.5Z"/>
<path transform="translate(448.10,316.38) scale(1.08,1)" d="M1.4 0.5 H4.2 Q5.1 0.5 5.1 1.6 V7.4 Q5.1 8.5 4.2 8.5 H1.4 Q0.5 8.5 0.5 7.4 V1.6 Q0.5 0.5 1.4 0.5Z"/>
<rect x="437.50" y="324.78" width="1.3" height="1.3" fill="#2a3458" stroke="none"/>
<path transform="translate(420.60,325.66) scale(1.08,1)" d="M0.5 1.8 Q0.7 0.5 2.6 0.5 H3.4 Q5.1 0.5 5.1 2.3 Q5.1 4.3 3 4.3 H2 M3 4.3 Q5.1 4.3 5.1 6.4 Q5.1 8.5 3.3 8.5 H2.6 Q0.7 8.5 0.5 7.2"/>
<path transform="translate(428.70,325.66) scale(1.08,1)" d="M0.5 1.8 Q0.7 0.5 2.6 0.5 H3.4 Q5.1 0.5 5.1 2.3 Q5.1 4.3 3 4.3 H2 M3 4.3 Q5.1 4.3 5.1 6.4 Q5.1 8.5 3.3 8.5 H2.6 Q0.7 8.5 0.5 7.2"/>
<path transform="translate(440.10,325.66) scale(1.08,1)" d="M1.6 0.5 H4 Q5 0.5 5 1.5 V3.3 Q5 4.3 4 4.3 H1.6 Q0.6 4.3 0.6 3.3 V1.5 Q0.6 0.5 1.6 0.5Z M1.6 4.3 H4 Q5.1 4.3 5.1 5.4 V7.4 Q5.1 8.5 4 8.5 H1.6 Q0.5 8.5 0.5 7.4 V5.4 Q0.5 4.3 1.6 4.3"/>
<path transform="translate(448.10,325.66) scale(1.08,1)" d="M4.3 8.7 V0.5 L0.4 6.2 H5.4"/>
<rect x="437.50" y="334.06" width="1.3" height="1.3" fill="#2a3458" stroke="none"/>
<path transform="translate(420.60,334.94) scale(1.08,1)" d="M0.5 1.8 Q0.7 0.5 2.6 0.5 H3.4 Q5.1 0.5 5.1 2.3 Q5.1 4.3 3 4.3 H2 M3 4.3 Q5.1 4.3 5.1 6.4 Q5.1 8.5 3.3 8.5 H2.6 Q0.7 8.5 0.5 7.2"/>
<path transform="translate(428.70,334.94) scale(1.08,1)" d="M0.5 1.8 Q0.7 0.5 2.6 0.5 H3.4 Q5.1 0.5 5.1 2.3 Q5.1 4.3 3 4.3 H2 M3 4.3 Q5.1 4.3 5.1 6.4 Q5.1 8.5 3.3 8.5 H2.6 Q0.7 8.5 0.5 7.2"/>
<path transform="translate(440.10,334.94) scale(1.08,1)" d="M4.9 0.8 Q4.6 0.5 4 0.5 H1.6 Q0.5 0.5 0.5 1.6 V7.4 Q0.5 8.5 1.6 8.5 H4 Q5.1 8.5 5.1 7.4 V5.4 Q5.1 4.3 4 4.3 H0.5"/>
<path transform="translate(448.10,334.94) scale(1.08,1)" d="M0.4 0.5 H5.2 L1.9 8.7"/>
<rect x="437.50" y="343.34" width="1.3" height="1.3" fill="#2a3458" stroke="none"/>
<path transform="translate(420.60,344.22) scale(1.08,1)" d="M0.5 1.8 Q0.7 0.5 2.6 0.5 H3.4 Q5.1 0.5 5.1 2.3 Q5.1 4.3 3 4.3 H2 M3 4.3 Q5.1 4.3 5.1 6.4 Q5.1 8.5 3.3 8.5 H2.6 Q0.7 8.5 0.5 7.2"/>
<path transform="translate(428.70,344.22) scale(1.08,1)" d="M0.5 1.8 Q0.7 0.5 2.6 0.5 H3.4 Q5.1 0.5 5.1 2.3 Q5.1 4.3 3 4.3 H2 M3 4.3 Q5.1 4.3 5.1 6.4 Q5.1 8.5 3.3 8.5 H2.6 Q0.7 8.5 0.5 7.2"/>
<path transform="translate(440.10,344.22) scale(1.08,1)" d="M5.1 0.5 H0.7 V4.1 H4 Q5.1 4.1 5.1 5.2 V7.4 Q5.1 8.5 4 8.5 H0.5"/>
<path transform="translate(448.10,344.22) scale(1.08,1)" d="M1.4 0.5 H4.2 Q5.1 0.5 5.1 1.6 V7.4 Q5.1 8.5 4.2 8.5 H1.4 Q0.5 8.5 0.5 7.4 V1.6 Q0.5 0.5 1.4 0.5Z"/>
<rect x="437.50" y="352.62" width="1.3" height="1.3" fill="#2a3458" stroke="none"/>
<path transform="translate(420.60,353.50) scale(1.08,1)" d="M0.5 1.8 Q0.7 0.5 2.6 0.5 H3.4 Q5.1 0.5 5.1 2.3 Q5.1 4.3 3 4.3 H2 M3 4.3 Q5.1 4.3 5.1 6.4 Q5.1 8.5 3.3 8.5 H2.6 Q0.7 8.5 0.5 7.2"/>
<path transform="translate(428.70,353.50) scale(1.08,1)" d="M0.5 1.8 Q0.7 0.5 2.6 0.5 H3.4 Q5.1 0.5 5.1 2.3 Q5.1 4.3 3 4.3 H2 M3 4.3 Q5.1 4.3 5.1 6.4 Q5.1 8.5 3.3 8.5 H2.6 Q0.7 8.5 0.5 7.2"/>
<path transform="translate(440.10,353.50) scale(1.08,1)" d="M0.5 1.8 Q0.7 0.5 2.6 0.5 H3.4 Q5.1 0.5 5.1 2.3 Q5.1 4.3 3 4.3 H2 M3 4.3 Q5.1 4.3 5.1 6.4 Q5.1 8.5 3.3 8.5 H2.6 Q0.7 8.5 0.5 7.2"/>
<path transform="translate(448.10,353.50) scale(1.08,1)" d="M4.3 8.7 V0.5 L0.4 6.2 H5.4"/>
<rect x="437.50" y="361.90" width="1.3" height="1.3" fill="#2a3458" stroke="none"/>
<path transform="translate(420.60,362.78) scale(1.08,1)" d="M0.5 1.8 Q0.7 0.5 2.6 0.5 H3.4 Q5.1 0.5 5.1 2.3 Q5.1 4.3 3 4.3 H2 M3 4.3 Q5.1 4.3 5.1 6.4 Q5.1 8.5 3.3 8.5 H2.6 Q0.7 8.5 0.5 7.2"/>
<path transform="translate(428.70,362.78) scale(1.08,1)" d="M0.5 1.8 Q0.7 0.5 2.6 0.5 H3.4 Q5.1 0.5 5.1 2.3 Q5.1 4.3 3 4.3 H2 M3 4.3 Q5.1 4.3 5.1 6.4 Q5.1 8.5 3.3 8.5 H2.6 Q0.7 8.5 0.5 7.2"/>
<path transform="translate(440.10,362.78) scale(1.08,1)" d="M3.1 -0.1 V9.2 M1.1 2 L3.1 0.4"/>
<path transform="translate(448.10,362.78) scale(1.08,1)" d="M0.4 0.5 H5.2 L1.9 8.7"/>
<rect x="437.50" y="371.18" width="1.3" height="1.3" fill="#2a3458" stroke="none"/>
<path transform="translate(420.60,372.06) scale(1.08,1)" d="M0.5 1.8 Q0.7 0.5 2.6 0.5 H3.4 Q5.1 0.5 5.1 2.3 Q5.1 4.3 3 4.3 H2 M3 4.3 Q5.1 4.3 5.1 6.4 Q5.1 8.5 3.3 8.5 H2.6 Q0.7 8.5 0.5 7.2"/>
<path transform="translate(428.70,372.06) scale(1.08,1)" d="M0.5 1.8 Q0.7 0.5 2.6 0.5 H3.4 Q5.1 0.5 5.1 2.3 Q5.1 4.3 3 4.3 H2 M3 4.3 Q5.1 4.3 5.1 6.4 Q5.1 8.5 3.3 8.5 H2.6 Q0.7 8.5 0.5 7.2"/>
<path transform="translate(440.10,372.06) scale(1.08,1)" d="M1.4 0.5 H4.2 Q5.1 0.5 5.1 1.6 V7.4 Q5.1 8.5 4.2 8.5 H1.4 Q0.5 8.5 0.5 7.4 V1.6 Q0.5 0.5 1.4 0.5Z"/>
<path transform="translate(448.10,372.06) scale(1.08,1)" d="M1.4 0.5 H4.2 Q5.1 0.5 5.1 1.6 V7.4 Q5.1 8.5 4.2 8.5 H1.4 Q0.5 8.5 0.5 7.4 V1.6 Q0.5 0.5 1.4 0.5Z"/>
<rect x="437.50" y="380.46" width="1.3" height="1.3" fill="#2a3458" stroke="none"/>
<path transform="translate(420.60,381.34) scale(1.08,1)" d="M0.5 1.8 Q0.7 0.5 2.6 0.5 H3.4 Q5.1 0.5 5.1 2.3 Q5.1 4.3 3 4.3 H2 M3 4.3 Q5.1 4.3 5.1 6.4 Q5.1 8.5 3.3 8.5 H2.6 Q0.7 8.5 0.5 7.2"/>
<path transform="translate(428.70,381.34) scale(1.08,1)" d="M0.5 2 Q0.6 0.5 2.8 0.5 Q5.1 0.5 5.1 2.4 Q5.1 3.8 3.2 5 L0.5 8.5 H5.3"/>
<path transform="translate(440.10,381.34) scale(1.08,1)" d="M1.6 0.5 H4 Q5 0.5 5 1.5 V3.3 Q5 4.3 4 4.3 H1.6 Q0.6 4.3 0.6 3.3 V1.5 Q0.6 0.5 1.6 0.5Z M1.6 4.3 H4 Q5.1 4.3 5.1 5.4 V7.4 Q5.1 8.5 4 8.5 H1.6 Q0.5 8.5 0.5 7.4 V5.4 Q0.5 4.3 1.6 4.3"/>
<path transform="translate(448.10,381.34) scale(1.08,1)" d="M0.5 1.8 Q0.7 0.5 2.6 0.5 H3.4 Q5.1 0.5 5.1 2.3 Q5.1 4.3 3 4.3 H2 M3 4.3 Q5.1 4.3 5.1 6.4 Q5.1 8.5 3.3 8.5 H2.6 Q0.7 8.5 0.5 7.2"/>
<rect x="437.50" y="389.74" width="1.3" height="1.3" fill="#2a3458" stroke="none"/>
<path transform="translate(420.60,390.62) scale(1.08,1)" d="M0.5 1.8 Q0.7 0.5 2.6 0.5 H3.4 Q5.1 0.5 5.1 2.3 Q5.1 4.3 3 4.3 H2 M3 4.3 Q5.1 4.3 5.1 6.4 Q5.1 8.5 3.3 8.5 H2.6 Q0.7 8.5 0.5 7.2"/>
<path transform="translate(428.70,390.62) scale(1.08,1)" d="M0.5 2 Q0.6 0.5 2.8 0.5 Q5.1 0.5 5.1 2.4 Q5.1 3.8 3.2 5 L0.5 8.5 H5.3"/>
<path transform="translate(440.10,390.62) scale(1.08,1)" d="M4.9 0.8 Q4.6 0.5 4 0.5 H1.6 Q0.5 0.5 0.5 1.6 V7.4 Q0.5 8.5 1.6 8.5 H4 Q5.1 8.5 5.1 7.4 V5.4 Q5.1 4.3 4 4.3 H0.5"/>
<path transform="translate(448.10,390.62) scale(1.08,1)" d="M0.4 0.5 H5.2 L1.9 8.7"/>
<rect x="437.50" y="399.02" width="1.3" height="1.3" fill="#2a3458" stroke="none"/>
<path transform="translate(420.60,399.90) scale(1.08,1)" d="M0.5 1.8 Q0.7 0.5 2.6 0.5 H3.4 Q5.1 0.5 5.1 2.3 Q5.1 4.3 3 4.3 H2 M3 4.3 Q5.1 4.3 5.1 6.4 Q5.1 8.5 3.3 8.5 H2.6 Q0.7 8.5 0.5 7.2"/>
<path transform="translate(428.70,399.90) scale(1.08,1)" d="M0.5 2 Q0.6 0.5 2.8 0.5 Q5.1 0.5 5.1 2.4 Q5.1 3.8 3.2 5 L0.5 8.5 H5.3"/>
<path transform="translate(440.10,399.90) scale(1.08,1)" d="M5.1 0.5 H0.7 V4.1 H4 Q5.1 4.1 5.1 5.2 V7.4 Q5.1 8.5 4 8.5 H0.5"/>
<path transform="translate(448.10,399.90) scale(1.08,1)" d="M1.4 0.5 H4.2 Q5.1 0.5 5.1 1.6 V7.4 Q5.1 8.5 4.2 8.5 H1.4 Q0.5 8.5 0.5 7.4 V1.6 Q0.5 0.5 1.4 0.5Z"/>
<rect x="437.50" y="408.30" width="1.3" height="1.3" fill="#2a3458" stroke="none"/>
<path transform="translate(420.60,409.18) scale(1.08,1)" d="M0.5 1.8 Q0.7 0.5 2.6 0.5 H3.4 Q5.1 0.5 5.1 2.3 Q5.1 4.3 3 4.3 H2 M3 4.3 Q5.1 4.3 5.1 6.4 Q5.1 8.5 3.3 8.5 H2.6 Q0.7 8.5 0.5 7.2"/>
<path transform="translate(428.70,409.18) scale(1.08,1)" d="M0.5 2 Q0.6 0.5 2.8 0.5 Q5.1 0.5 5.1 2.4 Q5.1 3.8 3.2 5 L0.5 8.5 H5.3"/>
<path transform="translate(440.10,409.18) scale(1.08,1)" d="M0.5 1.8 Q0.7 0.5 2.6 0.5 H3.4 Q5.1 0.5 5.1 2.3 Q5.1 4.3 3 4.3 H2 M3 4.3 Q5.1 4.3 5.1 6.4 Q5.1 8.5 3.3 8.5 H2.6 Q0.7 8.5 0.5 7.2"/>
<path transform="translate(448.10,409.18) scale(1.08,1)" d="M0.5 1.8 Q0.7 0.5 2.6 0.5 H3.4 Q5.1 0.5 5.1 2.3 Q5.1 4.3 3 4.3 H2 M3 4.3 Q5.1 4.3 5.1 6.4 Q5.1 8.5 3.3 8.5 H2.6 Q0.7 8.5 0.5 7.2"/>
<rect x="437.50" y="417.58" width="1.3" height="1.3" fill="#2a3458" stroke="none"/>
<path transform="translate(420.60,418.46) scale(1.08,1)" d="M0.5 1.8 Q0.7 0.5 2.6 0.5 H3.4 Q5.1 0.5 5.1 2.3 Q5.1 4.3 3 4.3 H2 M3 4.3 Q5.1 4.3 5.1 6.4 Q5.1 8.5 3.3 8.5 H2.6 Q0.7 8.5 0.5 7.2"/>
<path transform="translate(428.70,418.46) scale(1.08,1)" d="M0.5 2 Q0.6 0.5 2.8 0.5 Q5.1 0.5 5.1 2.4 Q5.1 3.8 3.2 5 L0.5 8.5 H5.3"/>
<path transform="translate(440.10,418.46) scale(1.08,1)" d="M3.1 -0.1 V9.2 M1.1 2 L3.1 0.4"/>
<path transform="translate(448.10,418.46) scale(1.08,1)" d="M0.4 0.5 H5.2 L1.9 8.7"/>
<rect x="437.50" y="426.86" width="1.3" height="1.3" fill="#2a3458" stroke="none"/>
<path transform="translate(420.60,427.74) scale(1.08,1)" d="M0.5 1.8 Q0.7 0.5 2.6 0.5 H3.4 Q5.1 0.5 5.1 2.3 Q5.1 4.3 3 4.3 H2 M3 4.3 Q5.1 4.3 5.1 6.4 Q5.1 8.5 3.3 8.5 H2.6 Q0.7 8.5 0.5 7.2"/>
<path transform="translate(428.70,427.74) scale(1.08,1)" d="M0.5 2 Q0.6 0.5 2.8 0.5 Q5.1 0.5 5.1 2.4 Q5.1 3.8 3.2 5 L0.5 8.5 H5.3"/>
<path transform="translate(440.10,427.74) scale(1.08,1)" d="M1.4 0.5 H4.2 Q5.1 0.5 5.1 1.6 V7.4 Q5.1 8.5 4.2 8.5 H1.4 Q0.5 8.5 0.5 7.4 V1.6 Q0.5 0.5 1.4 0.5Z"/>
<path transform="translate(448.10,427.74) scale(1.08,1)" d="M1.4 0.5 H4.2 Q5.1 0.5 5.1 1.6 V7.4 Q5.1 8.5 4.2 8.5 H1.4 Q0.5 8.5 0.5 7.4 V1.6 Q0.5 0.5 1.4 0.5Z"/>
<rect x="437.50" y="436.14" width="1.3" height="1.3" fill="#2a3458" stroke="none"/>
<path transform="translate(420.60,437.02) scale(1.08,1)" d="M0.5 1.8 Q0.7 0.5 2.6 0.5 H3.4 Q5.1 0.5 5.1 2.3 Q5.1 4.3 3 4.3 H2 M3 4.3 Q5.1 4.3 5.1 6.4 Q5.1 8.5 3.3 8.5 H2.6 Q0.7 8.5 0.5 7.2"/>
<path transform="translate(428.70,437.02) scale(1.08,1)" d="M3.1 -0.1 V9.2 M1.1 2 L3.1 0.4"/>
<path transform="translate(440.10,437.02) scale(1.08,1)" d="M1.6 0.5 H4 Q5 0.5 5 1.5 V3.3 Q5 4.3 4 4.3 H1.6 Q0.6 4.3 0.6 3.3 V1.5 Q0.6 0.5 1.6 0.5Z M1.6 4.3 H4 Q5.1 4.3 5.1 5.4 V7.4 Q5.1 8.5 4 8.5 H1.6 Q0.5 8.5 0.5 7.4 V5.4 Q0.5 4.3 1.6 4.3"/>
<path transform="translate(448.10,437.02) scale(1.08,1)" d="M0.5 1.8 Q0.7 0.5 2.6 0.5 H3.4 Q5.1 0.5 5.1 2.3 Q5.1 4.3 3 4.3 H2 M3 4.3 Q5.1 4.3 5.1 6.4 Q5.1 8.5 3.3 8.5 H2.6 Q0.7 8.5 0.5 7.2"/>
<rect x="437.50" y="445.42" width="1.3" height="1.3" fill="#2a3458" stroke="none"/>
<path transform="translate(420.60,446.30) scale(1.08,1)" d="M0.5 1.8 Q0.7 0.5 2.6 0.5 H3.4 Q5.1 0.5 5.1 2.3 Q5.1 4.3 3 4.3 H2 M3 4.3 Q5.1 4.3 5.1 6.4 Q5.1 8.5 3.3 8.5 H2.6 Q0.7 8.5 0.5 7.2"/>
<path transform="translate(428.70,446.30) scale(1.08,1)" d="M3.1 -0.1 V9.2 M1.1 2 L3.1 0.4"/>
<path transform="translate(440.10,446.30) scale(1.08,1)" d="M4.9 0.8 Q4.6 0.5 4 0.5 H1.6 Q0.5 0.5 0.5 1.6 V7.4 Q0.5 8.5 1.6 8.5 H4 Q5.1 8.5 5.1 7.4 V5.4 Q5.1 4.3 4 4.3 H0.5"/>
<path transform="translate(448.10,446.30) scale(1.08,1)" d="M0.4 0.5 H5.2 L1.9 8.7"/>
<rect x="437.50" y="454.70" width="1.3" height="1.3" fill="#2a3458" stroke="none"/>
<path transform="translate(420.60,455.58) scale(1.08,1)" d="M0.5 1.8 Q0.7 0.5 2.6 0.5 H3.4 Q5.1 0.5 5.1 2.3 Q5.1 4.3 3 4.3 H2 M3 4.3 Q5.1 4.3 5.1 6.4 Q5.1 8.5 3.3 8.5 H2.6 Q0.7 8.5 0.5 7.2"/>
<path transform="translate(428.70,455.58) scale(1.08,1)" d="M3.1 -0.1 V9.2 M1.1 2 L3.1 0.4"/>
<path transform="translate(440.10,455.58) scale(1.08,1)" d="M5.1 0.5 H0.7 V4.1 H4 Q5.1 4.1 5.1 5.2 V7.4 Q5.1 8.5 4 8.5 H0.5"/>
<path transform="translate(448.10,455.58) scale(1.08,1)" d="M1.4 0.5 H4.2 Q5.1 0.5 5.1 1.6 V7.4 Q5.1 8.5 4.2 8.5 H1.4 Q0.5 8.5 0.5 7.4 V1.6 Q0.5 0.5 1.4 0.5Z"/>
<rect x="437.50" y="463.98" width="1.3" height="1.3" fill="#2a3458" stroke="none"/>
<path transform="translate(420.60,464.86) scale(1.08,1)" d="M0.5 1.8 Q0.7 0.5 2.6 0.5 H3.4 Q5.1 0.5 5.1 2.3 Q5.1 4.3 3 4.3 H2 M3 4.3 Q5.1 4.3 5.1 6.4 Q5.1 8.5 3.3 8.5 H2.6 Q0.7 8.5 0.5 7.2"/>
<path transform="translate(428.70,464.86) scale(1.08,1)" d="M3.1 -0.1 V9.2 M1.1 2 L3.1 0.4"/>
<path transform="translate(440.10,464.86) scale(1.08,1)" d="M0.5 1.8 Q0.7 0.5 2.6 0.5 H3.4 Q5.1 0.5 5.1 2.3 Q5.1 4.3 3 4.3 H2 M3 4.3 Q5.1 4.3 5.1 6.4 Q5.1 8.5 3.3 8.5 H2.6 Q0.7 8.5 0.5 7.2"/>
<path transform="translate(448.10,464.86) scale(1.08,1)" d="M0.5 1.8 Q0.7 0.5 2.6 0.5 H3.4 Q5.1 0.5 5.1 2.3 Q5.1 4.3 3 4.3 H2 M3 4.3 Q5.1 4.3 5.1 6.4 Q5.1 8.5 3.3 8.5 H2.6 Q0.7 8.5 0.5 7.2"/>
<rect x="437.50" y="473.26" width="1.3" height="1.3" fill="#2a3458" stroke="none"/>
<path transform="translate(420.60,474.14) scale(1.08,1)" d="M0.5 1.8 Q0.7 0.5 2.6 0.5 H3.4 Q5.1 0.5 5.1 2.3 Q5.1 4.3 3 4.3 H2 M3 4.3 Q5.1 4.3 5.1 6.4 Q5.1 8.5 3.3 8.5 H2.6 Q0.7 8.5 0.5 7.2"/>
<path transform="translate(428.70,474.14) scale(1.08,1)" d="M3.1 -0.1 V9.2 M1.1 2 L3.1 0.4"/>
<path transform="translate(440.10,474.14) scale(1.08,1)" d="M3.1 -0.1 V9.2 M1.1 2 L3.1 0.4"/>
<path transform="translate(448.10,474.14) scale(1.08,1)" d="M0.4 0.5 H5.2 L1.9 8.7"/>
<rect x="437.50" y="482.54" width="1.3" height="1.3" fill="#2a3458" stroke="none"/>
<path transform="translate(420.60,483.42) scale(1.08,1)" d="M0.5 1.8 Q0.7 0.5 2.6 0.5 H3.4 Q5.1 0.5 5.1 2.3 Q5.1 4.3 3 4.3 H2 M3 4.3 Q5.1 4.3 5.1 6.4 Q5.1 8.5 3.3 8.5 H2.6 Q0.7 8.5 0.5 7.2"/>
<path transform="translate(428.70,483.42) scale(1.08,1)" d="M3.1 -0.1 V9.2 M1.1 2 L3.1 0.4"/>
<path transform="translate(440.10,483.42) scale(1.08,1)" d="M1.4 0.5 H4.2 Q5.1 0.5 5.1 1.6 V7.4 Q5.1 8.5 4.2 8.5 H1.4 Q0.5 8.5 0.5 7.4 V1.6 Q0.5 0.5 1.4 0.5Z"/>
<path transform="translate(448.10,483.42) scale(1.08,1)" d="M1.4 0.5 H4.2 Q5.1 0.5 5.1 1.6 V7.4 Q5.1 8.5 4.2 8.5 H1.4 Q0.5 8.5 0.5 7.4 V1.6 Q0.5 0.5 1.4 0.5Z"/>
<rect x="437.50" y="491.82" width="1.3" height="1.3" fill="#2a3458" stroke="none"/>
<path transform="translate(420.60,492.70) scale(1.08,1)" d="M0.5 1.8 Q0.7 0.5 2.6 0.5 H3.4 Q5.1 0.5 5.1 2.3 Q5.1 4.3 3 4.3 H2 M3 4.3 Q5.1 4.3 5.1 6.4 Q5.1 8.5 3.3 8.5 H2.6 Q0.7 8.5 0.5 7.2"/>
<path transform="translate(428.70,492.70) scale(1.08,1)" d="M1.4 0.5 H4.2 Q5.1 0.5 5.1 1.6 V7.4 Q5.1 8.5 4.2 8.5 H1.4 Q0.5 8.5 0.5 7.4 V1.6 Q0.5 0.5 1.4 0.5Z"/>
<path transform="translate(440.10,492.70) scale(1.08,1)" d="M1.6 0.5 H4 Q5 0.5 5 1.5 V3.3 Q5 4.3 4 4.3 H1.6 Q0.6 4.3 0.6 3.3 V1.5 Q0.6 0.5 1.6 0.5Z M1.6 4.3 H4 Q5.1 4.3 5.1 5.4 V7.4 Q5.1 8.5 4 8.5 H1.6 Q0.5 8.5 0.5 7.4 V5.4 Q0.5 4.3 1.6 4.3"/>
<path transform="translate(448.10,492.70) scale(1.08,1)" d="M0.5 1.8 Q0.7 0.5 2.6 0.5 H3.4 Q5.1 0.5 5.1 2.3 Q5.1 4.3 3 4.3 H2 M3 4.3 Q5.1 4.3 5.1 6.4 Q5.1 8.5 3.3 8.5 H2.6 Q0.7 8.5 0.5 7.2"/>
<rect x="437.50" y="501.10" width="1.3" height="1.3" fill="#2a3458" stroke="none"/>
<path transform="translate(420.60,501.98) scale(1.08,1)" d="M0.5 1.8 Q0.7 0.5 2.6 0.5 H3.4 Q5.1 0.5 5.1 2.3 Q5.1 4.3 3 4.3 H2 M3 4.3 Q5.1 4.3 5.1 6.4 Q5.1 8.5 3.3 8.5 H2.6 Q0.7 8.5 0.5 7.2"/>
<path transform="translate(428.70,501.98) scale(1.08,1)" d="M1.4 0.5 H4.2 Q5.1 0.5 5.1 1.6 V7.4 Q5.1 8.5 4.2 8.5 H1.4 Q0.5 8.5 0.5 7.4 V1.6 Q0.5 0.5 1.4 0.5Z"/>
<path transform="translate(440.10,501.98) scale(1.08,1)" d="M4.9 0.8 Q4.6 0.5 4 0.5 H1.6 Q0.5 0.5 0.5 1.6 V7.4 Q0.5 8.5 1.6 8.5 H4 Q5.1 8.5 5.1 7.4 V5.4 Q5.1 4.3 4 4.3 H0.5"/>
<path transform="translate(448.10,501.98) scale(1.08,1)" d="M0.4 0.5 H5.2 L1.9 8.7"/>
<rect x="437.50" y="510.38" width="1.3" height="1.3" fill="#2a3458" stroke="none"/>
<path transform="translate(420.60,511.26) scale(1.08,1)" d="M0.5 1.8 Q0.7 0.5 2.6 0.5 H3.4 Q5.1 0.5 5.1 2.3 Q5.1 4.3 3 4.3 H2 M3 4.3 Q5.1 4.3 5.1 6.4 Q5.1 8.5 3.3 8.5 H2.6 Q0.7 8.5 0.5 7.2"/>
<path transform="translate(428.70,511.26) scale(1.08,1)" d="M1.4 0.5 H4.2 Q5.1 0.5 5.1 1.6 V7.4 Q5.1 8.5 4.2 8.5 H1.4 Q0.5 8.5 0.5 7.4 V1.6 Q0.5 0.5 1.4 0.5Z"/>
<path transform="translate(440.10,511.26) scale(1.08,1)" d="M5.1 0.5 H0.7 V4.1 H4 Q5.1 4.1 5.1 5.2 V7.4 Q5.1 8.5 4 8.5 H0.5"/>
<path transform="translate(448.10,511.26) scale(1.08,1)" d="M1.4 0.5 H4.2 Q5.1 0.5 5.1 1.6 V7.4 Q5.1 8.5 4.2 8.5 H1.4 Q0.5 8.5 0.5 7.4 V1.6 Q0.5 0.5 1.4 0.5Z"/>
<rect x="437.50" y="519.66" width="1.3" height="1.3" fill="#2a3458" stroke="none"/>
<path transform="translate(420.60,520.54) scale(1.08,1)" d="M0.5 1.8 Q0.7 0.5 2.6 0.5 H3.4 Q5.1 0.5 5.1 2.3 Q5.1 4.3 3 4.3 H2 M3 4.3 Q5.1 4.3 5.1 6.4 Q5.1 8.5 3.3 8.5 H2.6 Q0.7 8.5 0.5 7.2"/>
<path transform="translate(428.70,520.54) scale(1.08,1)" d="M1.4 0.5 H4.2 Q5.1 0.5 5.1 1.6 V7.4 Q5.1 8.5 4.2 8.5 H1.4 Q0.5 8.5 0.5 7.4 V1.6 Q0.5 0.5 1.4 0.5Z"/>
<path transform="translate(440.10,520.54) scale(1.08,1)" d="M0.5 1.8 Q0.7 0.5 2.6 0.5 H3.4 Q5.1 0.5 5.1 2.3 Q5.1 4.3 3 4.3 H2 M3 4.3 Q5.1 4.3 5.1 6.4 Q5.1 8.5 3.3 8.5 H2.6 Q0.7 8.5 0.5 7.2"/>
<path transform="translate(448.10,520.54) scale(1.08,1)" d="M0.5 1.8 Q0.7 0.5 2.6 0.5 H3.4 Q5.1 0.5 5.1 2.3 Q5.1 4.3 3 4.3 H2 M3 4.3 Q5.1 4.3 5.1 6.4 Q5.1 8.5 3.3 8.5 H2.6 Q0.7 8.5 0.5 7.2"/>
<rect x="437.50" y="528.94" width="1.3" height="1.3" fill="#2a3458" stroke="none"/>
<path transform="translate(420.60,529.82) scale(1.08,1)" d="M0.5 1.8 Q0.7 0.5 2.6 0.5 H3.4 Q5.1 0.5 5.1 2.3 Q5.1 4.3 3 4.3 H2 M3 4.3 Q5.1 4.3 5.1 6.4 Q5.1 8.5 3.3 8.5 H2.6 Q0.7 8.5 0.5 7.2"/>
<path transform="translate(428.70,529.82) scale(1.08,1)" d="M1.4 0.5 H4.2 Q5.1 0.5 5.1 1.6 V7.4 Q5.1 8.5 4.2 8.5 H1.4 Q0.5 8.5 0.5 7.4 V1.6 Q0.5 0.5 1.4 0.5Z"/>
<path transform="translate(440.10,529.82) scale(1.08,1)" d="M3.1 -0.1 V9.2 M1.1 2 L3.1 0.4"/>
<path transform="translate(448.10,529.82) scale(1.08,1)" d="M0.4 0.5 H5.2 L1.9 8.7"/>
<rect x="437.50" y="538.22" width="1.3" height="1.3" fill="#2a3458" stroke="none"/>
<path transform="translate(420.60,539.10) scale(1.08,1)" d="M0.5 1.8 Q0.7 0.5 2.6 0.5 H3.4 Q5.1 0.5 5.1 2.3 Q5.1 4.3 3 4.3 H2 M3 4.3 Q5.1 4.3 5.1 6.4 Q5.1 8.5 3.3 8.5 H2.6 Q0.7 8.5 0.5 7.2"/>
<path transform="translate(428.70,539.10) scale(1.08,1)" d="M1.4 0.5 H4.2 Q5.1 0.5 5.1 1.6 V7.4 Q5.1 8.5 4.2 8.5 H1.4 Q0.5 8.5 0.5 7.4 V1.6 Q0.5 0.5 1.4 0.5Z"/>
<path transform="translate(440.10,539.10) scale(1.08,1)" d="M1.4 0.5 H4.2 Q5.1 0.5 5.1 1.6 V7.4 Q5.1 8.5 4.2 8.5 H1.4 Q0.5 8.5 0.5 7.4 V1.6 Q0.5 0.5 1.4 0.5Z"/>
<path transform="translate(448.10,539.10) scale(1.08,1)" d="M1.4 0.5 H4.2 Q5.1 0.5 5.1 1.6 V7.4 Q5.1 8.5 4.2 8.5 H1.4 Q0.5 8.5 0.5 7.4 V1.6 Q0.5 0.5 1.4 0.5Z"/>
<rect x="437.50" y="547.50" width="1.3" height="1.3" fill="#2a3458" stroke="none"/>
</g></svg>

<!-- console -->
<div class="a" style="left:351px;top:570.5px;width:857px;height:150px;background:#fcfcfc;border-top:2px solid #7c7c7c;border-left:1px solid #8a8a8a"></div>
<div class="con" style="top:574.9px">&gt; define/boundary-conditions/solid (body)</div>
<div class="con" style="top:589.4px">body yes copper n n n n 0 n 0 n n</div>
<div class="con" style="top:618.3px">&gt; define/boundary-conditions/wall (left right top bottom)</div>
<div class="con" style="top:632.8px">left 0 n 0 n y temperature n 30 n 0</div>
<div class="con" style="top:661.7px">&gt; define/boundary-conditions/wall (left right top bottom)</div>
<div class="con" style="top:676.2px">right 0 n 0 n y heat-flux n 3250 n 0</div>
<div class="con" style="top:705.1px">&gt; solve/initialize/hyb-initialization</div>
</body></html>
